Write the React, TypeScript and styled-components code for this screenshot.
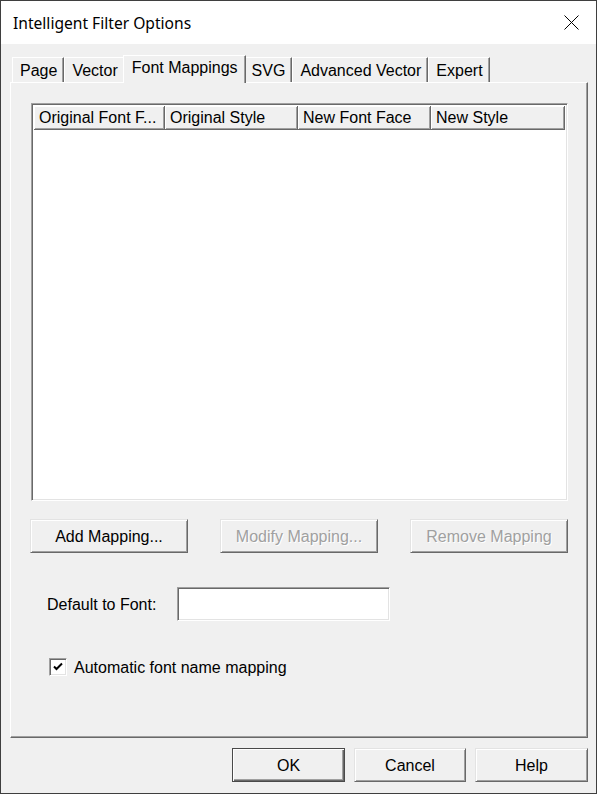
import React, { useState } from "react";
import styled, { createGlobalStyle, css } from "styled-components";

const GlobalStyle = createGlobalStyle`
  html, body {
    margin: 0;
    padding: 0;
    background: #f0f0f0;
  }
  * {
    box-sizing: border-box;
  }
`;

const raised = css`
  border-top: 1px solid #e3e3e3;
  border-left: 1px solid #e3e3e3;
  border-right: 1px solid #696969;
  border-bottom: 1px solid #696969;
  box-shadow: inset 1px 1px #ffffff, inset -1px -1px #a0a0a0;
`;

const sunken = css`
  border-top: 1px solid #a0a0a0;
  border-left: 1px solid #a0a0a0;
  border-right: 1px solid #ffffff;
  border-bottom: 1px solid #ffffff;
  box-shadow: inset 1px 1px #696969, inset -1px -1px #e3e3e3;
`;

const Window = styled.div`
  width: 597px;
  height: 794px;
  border: 1px solid #3f3f3f;
  background: #f0f0f0;
  display: flex;
  flex-direction: column;
  font-family: "Liberation Sans", Arial, sans-serif;
  font-size: 16px;
  color: #000;
`;

const TitleBar = styled.div`
  height: 43px;
  flex: none;
  background: #ffffff;
  display: flex;
  align-items: center;
  justify-content: space-between;
  padding: 0 17px 0 12px;
`;

const Title = styled.span`
  font-family: "Noto Sans", "Open Sans", sans-serif;
  font-size: 15.6px;
  padding-top: 1px;
`;

const CloseButton = styled.button`
  border: none;
  background: none;
  padding: 0;
  width: 15px;
  height: 15px;
  display: flex;
  cursor: default;
`;

const Body = styled.div`
  flex: 1;
  display: flex;
  flex-direction: column;
  padding: 11px 8px 0 9px;
`;

const TabStrip = styled.div`
  display: flex;
  align-items: flex-end;
  height: 27px;
  padding-left: 2px;
  position: relative;
  z-index: 1;
`;

const Tab = styled.div<{ $active?: boolean }>`
  height: 25px;
  padding: 1px 6px 0 7px;
  display: flex;
  align-items: center;
  background: #f0f0f0;
  border-top: 1px solid #ffffff;
  border-left: 1px solid #ffffff;
  border-right: 1px solid #696969;
  box-shadow: inset -1px 0 #a0a0a0;
  white-space: nowrap;
  cursor: default;

  ${({ $active }) =>
    $active &&
    css`
      height: 28px;
      margin: 0 -2px -1px;
      padding: 0 7px 3px 8px;
      position: relative;
      z-index: 2;
    `}
`;

const Panel = styled.div`
  width: 578px;
  height: 656px;
  border-top: 1px solid #ffffff;
  border-left: 1px solid #ffffff;
  border-right: 1px solid #696969;
  border-bottom: 1px solid #696969;
  box-shadow: inset -1px -1px #a0a0a0;
  padding: 20px 0 0 20px;
  display: flex;
  flex-direction: column;
`;

const ListView = styled.div`
  width: 537px;
  height: 398px;
  background: #ffffff;
  ${sunken};
  padding: 2px;
  display: flex;
  flex-direction: column;
`;

const HeaderRow = styled.div`
  display: flex;
  height: 24px;
  flex: none;
`;

const HeaderCell = styled.div<{ $width: number }>`
  width: ${({ $width }) => $width}px;
  flex: none;
  background: #f0f0f0;
  border-right: 1px solid #696969;
  border-bottom: 1px solid #696969;
  box-shadow: inset 1px 1px #ffffff, inset -1px -1px #a0a0a0;
  padding: 0 0 0 5px;
  white-space: nowrap;
  overflow: hidden;
  display: flex;
  align-items: center;
`;

const ButtonRow = styled.div`
  width: 538px;
  margin: 18px 0 0 -1px;
  display: flex;
  justify-content: space-between;
`;

const Button = styled.button<{ $width?: number; $default?: boolean }>`
  width: ${({ $width }) => $width ?? 158}px;
  height: 34px;
  background: #f0f0f0;
  font-family: "Liberation Sans", Arial, sans-serif;
  font-size: 16px;
  color: #000;
  padding: 2px 0 0;
  ${raised};

  &:disabled {
    color: #a0a0a0;
    text-shadow: 1px 1px #ffffff;
  }

  ${({ $default }) =>
    $default &&
    css`
      border: 1px solid #4a4a4a;
      box-shadow: inset 1px 1px #ffffff, inset -1px -1px #696969,
        inset -2px -2px #a0a0a0;
    `}
`;

const FieldRow = styled.div`
  display: flex;
  align-items: center;
  margin: 34px 0 0 16px;
`;

const FieldLabel = styled.label`
  width: 130px;
  flex: none;
  padding-top: 1px;
`;

const TextInput = styled.input`
  width: 213px;
  height: 34px;
  background: #ffffff;
  ${sunken};
  font-family: "Liberation Sans", Arial, sans-serif;
  font-size: 16px;
  padding: 0 6px;
  outline: none;
`;

const CheckRow = styled.label`
  display: flex;
  align-items: center;
  margin: 36px 0 0 18px;
  gap: 7px;
  cursor: default;
`;

const CheckLabel = styled.span`
  padding-top: 2px;
`;

const CheckBox = styled.span`
  width: 18px;
  height: 18px;
  background: #ffffff;
  ${sunken};
  display: flex;
  align-items: center;
  justify-content: center;
`;

const Footer = styled.div`
  display: flex;
  justify-content: flex-end;
  gap: 9px;
  margin-top: 10px;
`;

const columns = [
  { title: "Original Font F...", width: 131 },
  { title: "Original Style", width: 133 },
  { title: "New Font Face", width: 133 },
  { title: "New Style", width: 134 },
];

const tabs = ["Page", "Vector", "Font Mappings", "SVG", "Advanced Vector", "Expert"];

const App = () => {
  const [active, setActive] = useState("Font Mappings");
  const [checked, setChecked] = useState(true);

  return (
    <>
      <GlobalStyle />
      <Window>
        <TitleBar>
          <Title>Intelligent Filter Options</Title>
          <CloseButton aria-label="Close">
            <svg width="15" height="15" viewBox="0 0 15 15">
              <path d="M0.5 0.5L14.5 14.5M14.5 0.5L0.5 14.5" stroke="#000" strokeWidth="1" />
            </svg>
          </CloseButton>
        </TitleBar>
        <Body>
          <TabStrip>
            {tabs.map((t) => (
              <Tab key={t} $active={t === active} onClick={() => setActive(t)}>
                {t}
              </Tab>
            ))}
          </TabStrip>
          <Panel>
            <ListView>
              <HeaderRow>
                {columns.map((c) => (
                  <HeaderCell key={c.title} $width={c.width}>
                    {c.title}
                  </HeaderCell>
                ))}
              </HeaderRow>
            </ListView>
            <ButtonRow>
              <Button>Add Mapping...</Button>
              <Button disabled>Modify Mapping...</Button>
              <Button disabled>Remove Mapping</Button>
            </ButtonRow>
            <FieldRow>
              <FieldLabel>Default to Font:</FieldLabel>
              <TextInput />
            </FieldRow>
            <CheckRow onClick={() => setChecked(!checked)}>
              <CheckBox>
                {checked && (
                  <svg width="10" height="10" viewBox="0 0 10 10">
                    <path d="M1 4.5L3.5 7L9 1.5" stroke="#000" strokeWidth="2" fill="none" />
                  </svg>
                )}
              </CheckBox>
              <CheckLabel>Automatic font name mapping</CheckLabel>
            </CheckRow>
          </Panel>
          <Footer>
            <Button $width={113} $default>
              OK
            </Button>
            <Button $width={112}>Cancel</Button>
            <Button $width={113}>Help</Button>
          </Footer>
        </Body>
      </Window>
    </>
  );
};

export default App;
